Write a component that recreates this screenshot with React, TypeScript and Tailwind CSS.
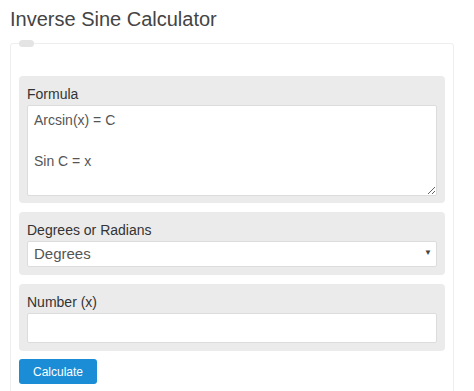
import { useState } from "react";

export default function App() {
  const [unit, setUnit] = useState("Degrees");
  const [num, setNum] = useState("");

  return (
    <div className="min-h-screen bg-white font-['Liberation_Sans',Arial,sans-serif] text-[#333]">
      <h1 className="px-[10px] pt-[7px] text-[20px] leading-[24px] text-[#444]">Inverse Sine Calculator</h1>

      <div className="relative ml-[10px] mt-[12px] w-[444px] rounded-[3px] border border-[#eeeeee] px-[8px] pt-[32px] pb-[10px]">
        {/* legend pill */}
        <div className="absolute left-[8px] top-[-4px] h-[7px] w-[15px] rounded-full bg-[#e4e4e4]" />

        <div className="space-y-[9px]">
          <div className="rounded-[4px] bg-[#ebebeb] px-[8px] pt-[9px] pb-[7px]">
            <label className="block text-[14px] leading-[19px] text-[#333]">Formula</label>
            <textarea
              readOnly
              value={"Arcsin(x) = C\n\nSin C = x"}
              className="mt-[1px] block h-[91px] w-full rounded-[2px] border border-[#dcdcdc] bg-white px-[6px] py-[4px] text-[14px] leading-[20.5px] text-[#555] outline-none"
            />
          </div>

          <div className="rounded-[4px] bg-[#ebebeb] px-[8px] pt-[9px] pb-[8px]">
            <label className="block text-[14px] leading-[19px] text-[#333]">Degrees or Radians</label>
            <div className="relative mt-[1px]">
              <select
                value={unit}
                onChange={(e) => setUnit(e.target.value)}
                className="block h-[26px] w-full appearance-none rounded-[2px] border border-[#dcdcdc] bg-white px-[6px] text-[15px] text-[#555] outline-none"
              >
                <option>Degrees</option>
                <option>Radians</option>
              </select>
              <span className="pointer-events-none absolute right-[5px] top-[8px] text-[8px] leading-none text-[#444]">▼</span>
            </div>
          </div>

          <div className="rounded-[4px] bg-[#ebebeb] px-[8px] pt-[9px] pb-[8px]">
            <label className="block text-[14px] leading-[19px] text-[#333]">Number (x)</label>
            <input
              value={num}
              onChange={(e) => setNum(e.target.value)}
              className="mt-[1px] block h-[30px] w-full rounded-[2px] border border-[#dcdcdc] bg-white px-[6px] text-[14px] text-[#555] outline-none"
            />
          </div>
        </div>

        <button className="mt-[8px] h-[25px] w-[78px] rounded-[3px] bg-[#1a8dd6] text-[12px] text-white">
          Calculate
        </button>
      </div>
    </div>
  );
}
